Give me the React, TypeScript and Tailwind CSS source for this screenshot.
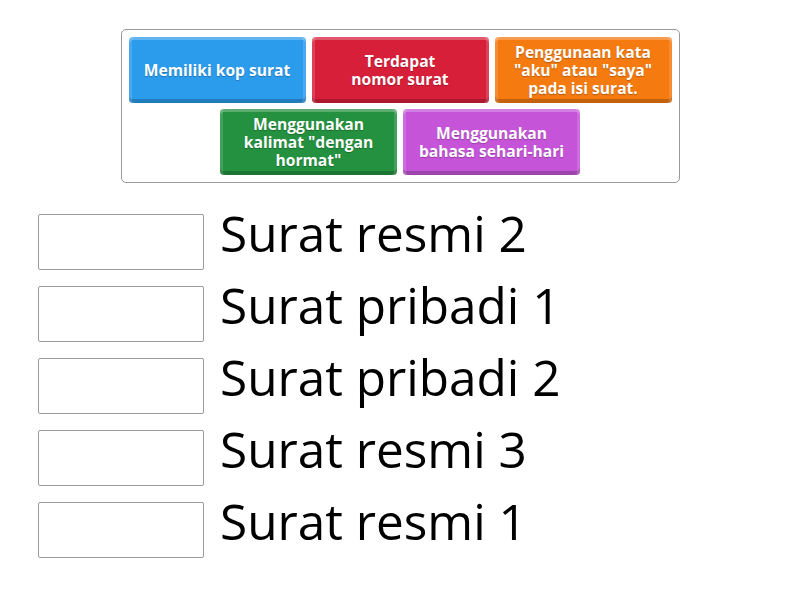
import React from 'react';

interface Tile {
  label: React.ReactNode;
  face: string;
}

const BEVEL =
  'shadow-[inset_3px_0_0_rgba(255,255,255,0.15),inset_-3px_0_0_rgba(255,255,255,0.15),inset_0_3px_0_rgba(255,255,255,0.25),inset_0_-4px_0_rgba(0,0,0,0.2)]';

const TILES: Tile[] = [
  { label: 'Memiliki kop surat', face: 'bg-[#2b9bec]' },
  { label: <>Terdapat<br />nomor surat</>, face: 'bg-[#d81f3a]' },
  { label: <>Penggunaan kata<br />"aku" atau "saya"<br />pada isi surat.</>, face: 'bg-[#f57a0f]' },
  { label: <>Menggunakan<br />kalimat "dengan<br />hormat"</>, face: 'bg-[#23913f]' },
  { label: <>Menggunakan<br />bahasa sehari-hari</>, face: 'bg-[#c554d8]' },
];

const TARGETS = ['Surat resmi 2', 'Surat pribadi 1', 'Surat pribadi 2', 'Surat resmi 3', 'Surat resmi 1'];

export default function App() {
  return (
    <div className="w-[800px] h-[600px] bg-white font-['Open_Sans',sans-serif] overflow-hidden">
      {/* Tile bank */}
      <div className="pt-[29px] flex justify-center">
        <div className="w-[559px] border border-[#9a9a9a] rounded-[5px] p-[7px] flex flex-wrap justify-center gap-[6px]">
          {TILES.map((t, i) => (
            <div
              key={i}
              className={`w-[177px] h-[66px] rounded-[4px] flex items-center justify-center text-center text-white font-bold text-[15.6px] leading-[18px] [text-shadow:0_1px_1px_rgba(0,0,0,0.25)] ${BEVEL} ${t.face}`}
            >
              <span>{t.label}</span>
            </div>
          ))}
        </div>
      </div>

      {/* Answer rows */}
      <div className="mt-[31px] pl-[38px] flex flex-col gap-[16px]">
        {TARGETS.map(name => (
          <div key={name} className="flex items-start h-[56px]">
            <div className="w-[166px] h-[56px] border border-[#9a9a9a] rounded-[2px] shrink-0" />
            <span className="ml-[16px] text-[49.5px] leading-[56px] text-black -mt-[9px] whitespace-nowrap">{name}</span>
          </div>
        ))}
      </div>
    </div>
  );
}
